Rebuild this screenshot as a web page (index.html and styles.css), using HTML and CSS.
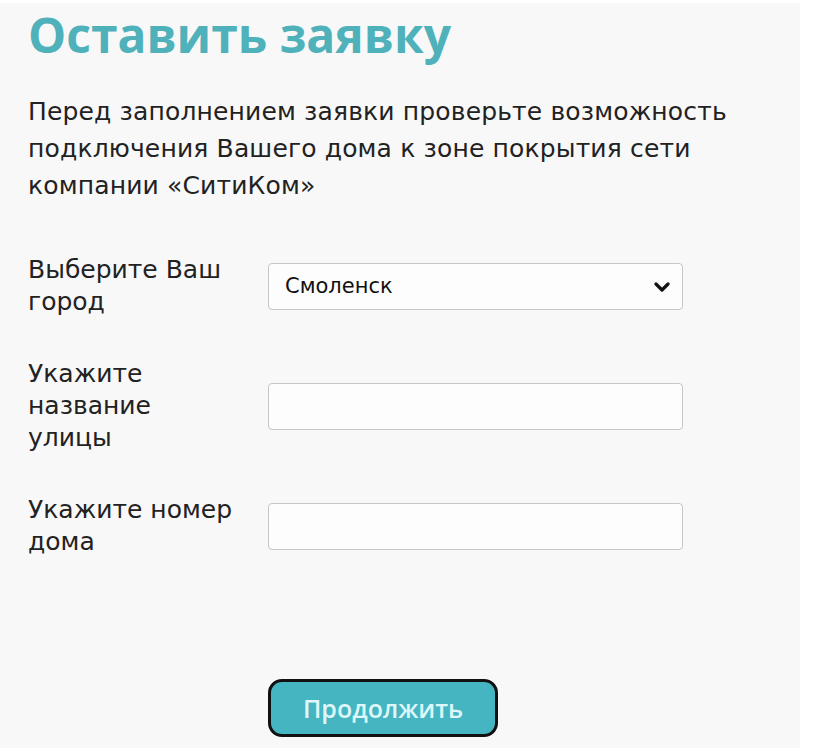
FILE: index.html
```html
<!DOCTYPE html>
<html lang="ru">
<head>
  <meta charset="UTF-8" />
  <meta name="viewport" content="width=device-width, initial-scale=1.0"/>
  <title>Оставить заявку</title>
  <link rel="stylesheet" href="styles.css">
</head>
<body>
  <div class="request-box">
    <h1 class="request-title">Оставить заявку</h1>
    <p class="request-note">
      Перед заполнением заявки проверьте возможность
      подключения Вашего дома к зоне покрытия сети
      компании «СитиКом»
    </p>

    <form class="request-form">
      <div class="form-row">
        <label for="city">Выберите Ваш город</label>
        <div class="select-wrap">
          <select id="city">
            <option>Смоленск</option>
          </select>
          <svg class="select-arrow" width="16" height="12" viewBox="0 0 16 12">
            <path d="M2 3 L8 9 L14 3" fill="none" stroke="#111" stroke-width="3.2" stroke-linecap="round" stroke-linejoin="round"/>
          </svg>
        </div>
      </div>

      <div class="form-row">
        <label for="street">Укажите название улицы</label>
        <input type="text" id="street" />
      </div>

      <div class="form-row">
        <label for="house">Укажите номер дома</label>
        <input type="text" id="house" />
      </div>

      <div class="buttons">
        <button type="button" class="next-btn">Продолжить</button>
      </div>
    </form>
  </div>
</body>
</html>
```

FILE: styles.css
```css
body {
  margin: 0;
  padding: 0;
  background-color: #fff;
  font-family: "DejaVu Sans", Verdana, sans-serif;
}

.request-box {
  width: 772px;
  height: 745px;
  margin-top: 3px;
  padding: 0 0 0 28px;
  background: #f8f8f8;
}

.request-title {
  margin: 0;
  padding-top: 2px;
  font-family: "Open Sans", sans-serif;
  font-weight: bold;
  font-size: 48px;
  line-height: 60px;
  color: #4fb1b9;
}

.request-note {
  margin: 28px 0 0 0;
  width: 740px;
  font-size: 25px;
  line-height: 37px;
  letter-spacing: 0.15px;
  color: #222;
}

.request-form {
  margin-top: 50px;
}

.form-row {
  display: grid;
  grid-template-columns: 240px 415px;
  align-items: center;
  margin-bottom: 40px;
}

.form-row label {
  width: 205px;
  font-size: 25px;
  line-height: 32px;
  color: #222;
}

.select-wrap {
  position: relative;
}

.form-row select,
.form-row input {
  box-sizing: border-box;
  width: 415px;
  height: 47px;
  border: 1px solid #c6c6c6;
  border-radius: 4px;
  background: #fdfdfd;
  font-family: "DejaVu Sans", Verdana, sans-serif;
  font-size: 21px;
  color: #111;
}

.form-row select {
  appearance: none;
  padding: 0 16px;
}

.select-arrow {
  position: absolute;
  right: 13px;
  top: 18px;
}

.buttons {
  margin: 121px 0 0 240px;
}

.next-btn {
  width: 230px;
  height: 58px;
  border: 3px solid #111;
  border-radius: 14px;
  background-color: #45b5c2;
  color: #def7f9;
  font-family: "Open Sans", sans-serif;
  font-weight: 600;
  font-size: 25px;
  cursor: pointer;
}
```
